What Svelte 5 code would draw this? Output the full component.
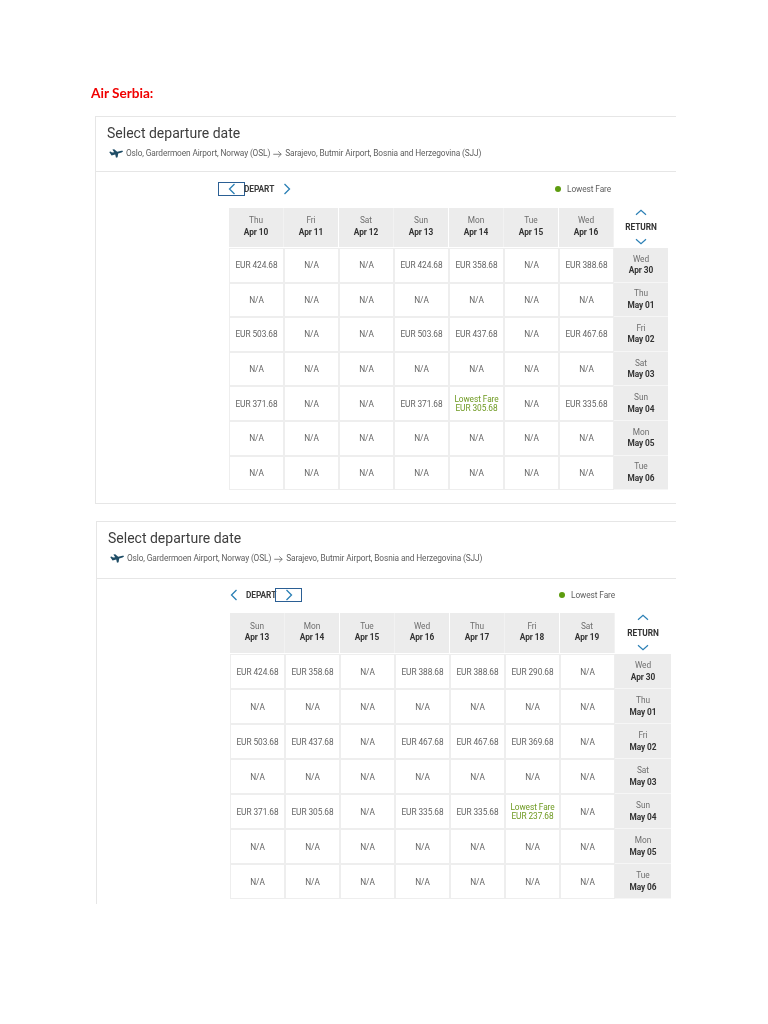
<script>
  const na = 'N/A';
  const returns = [['Wed','Apr 30'],['Thu','May 01'],['Fri','May 02'],['Sat','May 03'],['Sun','May 04'],['Mon','May 05'],['Tue','May 06']];
  const low = (v) => ({ low: true, v });
  const panels = [
    {
      cls: 'first',
      days: [['Thu','Apr 10'],['Fri','Apr 11'],['Sat','Apr 12'],['Sun','Apr 13'],['Mon','Apr 14'],['Tue','Apr 15'],['Wed','Apr 16']],
      focus: 'prev',
      rows: [
        ['EUR 424.68',na,na,'EUR 424.68','EUR 358.68',na,'EUR 388.68'],
        [na,na,na,na,na,na,na],
        ['EUR 503.68',na,na,'EUR 503.68','EUR 437.68',na,'EUR 467.68'],
        [na,na,na,na,na,na,na],
        ['EUR 371.68',na,na,'EUR 371.68',low('EUR 305.68'),na,'EUR 335.68'],
        [na,na,na,na,na,na,na],
        [na,na,na,na,na,na,na]
      ]
    },
    {
      cls: 'second',
      days: [['Sun','Apr 13'],['Mon','Apr 14'],['Tue','Apr 15'],['Wed','Apr 16'],['Thu','Apr 17'],['Fri','Apr 18'],['Sat','Apr 19']],
      focus: 'next',
      rows: [
        ['EUR 424.68','EUR 358.68',na,'EUR 388.68','EUR 388.68','EUR 290.68',na],
        [na,na,na,na,na,na,na],
        ['EUR 503.68','EUR 437.68',na,'EUR 467.68','EUR 467.68','EUR 369.68',na],
        [na,na,na,na,na,na,na],
        ['EUR 371.68','EUR 305.68',na,'EUR 335.68','EUR 335.68',low('EUR 237.68'),na],
        [na,na,na,na,na,na,na],
        [na,na,na,na,na,na,na]
      ]
    }
  ];
</script>

<main class="page">
  <h1 class="label">Air Serbia:</h1>

  {#each panels as p}
    <section class="panel {p.cls}">
      <header class="head">
        <h2>Select departure date</h2>
        <p class="route">
          <svg class="plane" viewBox="0 0 14 9" width="14" height="9" aria-hidden="true">
            <path d="M0.2 3 L1.6 2.6 L3 3.6 L5.2 3.2 L3.4 0.6 L5.2 0.2 L8.2 2.8 L11.4 2 C12.6 1.7 13.7 1.5 13.9 2 C14.1 2.6 13 3.3 11.8 3.7 L9.2 4.6 L8.6 8.2 L7 8.8 L6.2 5.6 L2.6 6.4 Z" />
          </svg>
          <span>Oslo, Gardermoen Airport, Norway (OSL)</span>
          <svg class="arrow" viewBox="0 0 10 8" width="9" height="8" aria-hidden="true">
            <path d="M0.3 4.3 H9 M5.8 1 L9.2 4.3 L5.8 7.4" />
          </svg>
          <span>Sarajevo, Butmir Airport, Bosnia and Herzegovina (SJJ)</span>
        </p>
      </header>

      <div class="nav">
        <button class="chev" class:focus={p.focus === 'prev'} aria-label="Previous">
          <svg viewBox="0 0 8 12" width="8" height="12"><path d="M6.5 1 L1.5 6 L6.5 11" /></svg>
        </button>
        <span class="depart">DEPART</span>
        <button class="chev" class:focus={p.focus === 'next'} aria-label="Next">
          <svg viewBox="0 0 8 12" width="8" height="12"><path d="M1.5 1 L6.5 6 L1.5 11" /></svg>
        </button>
        <span class="legend"><i class="dot"></i>Lowest Fare</span>
      </div>

      <div class="grid">
        {#each p.days as d}
          <div class="dayhead"><span>{d[0]}</span><b>{d[1]}</b></div>
        {/each}
        <div class="returnhead">
          <svg viewBox="0 0 12 7" width="12" height="7"><path d="M1 5.8 L6 1.2 L11 5.8" /></svg>
          <b>RETURN</b>
          <svg viewBox="0 0 12 7" width="12" height="7"><path d="M1 1.2 L6 5.8 L11 1.2" /></svg>
        </div>
        {#each p.rows as row, r}
          {#each row as c}
            {#if typeof c === 'object'}
              <div class="cell lowest"><span>Lowest Fare</span><span>{c.v}</span></div>
            {:else}
              <div class="cell">{c}</div>
            {/if}
          {/each}
          <div class="returncell"><span>{returns[r][0]}</span><b>{returns[r][1]}</b></div>
        {/each}
      </div>
    </section>
  {/each}
</main>

<style>
  :global(body) { margin: 0; background: #fff; }
  .page {
    width: 768px;
    height: 1024px;
    box-sizing: border-box;
    padding-top: 85px;
    font-family: Roboto, "Liberation Sans", sans-serif;
    color: #666;
    overflow: hidden;
    filter: blur(0.3px);
  }
  .label {
    margin: 0 0 0 91px;
    height: 31px;
    font: bold 13.6px/16px Lato, "Liberation Sans", sans-serif;
    color: #f00000;
  }
  .panel {
    box-sizing: border-box;
    width: 581px;
    margin-left: 95px;
    border: 1px solid #e6e6e6;
    border-right: 0;
    height: 388px;
    margin-bottom: 17px;
  }
  .panel.second {
    margin-left: 96px;
    width: 580px;
    height: 383px;
    margin-bottom: 0;
    border-bottom: 0;
  }
  .head {
    height: 55px;
    box-sizing: border-box;
    padding: 7px 0 0 11px;
    border-bottom: 1px solid #e6e6e6;
  }
  .second .head { height: 57px; padding-top: 7px; }
  h2 {
    margin: 0;
    font-size: 14px;
    line-height: 18px;
    font-weight: 400;
    color: #3d3d3d;
  }
  .route {
    margin: 4px 0 0 2px;
    display: flex;
    align-items: center;
    font-size: 8.3px;
    letter-spacing: -0.11px;
    line-height: 14px;
    color: #5e5e5e;
    white-space: nowrap;
  }
  .plane { fill: #1f4d66; margin-right: 3px; }
  .arrow { fill: none; stroke: #666; stroke-width: 0.9; margin: 1px 3px 0 3px; }
  .nav {
    display: flex;
    align-items: center;
    height: 14px;
    margin: 10px 0 0 122px;
    padding-right: 65px;
  }
  .second .nav { margin: 9px 0 0 123px; padding-right: 61px; }
  .chev {
    box-sizing: border-box;
    width: 27px;
    height: 14px;
    padding: 0;
    background: none;
    border: 1.5px solid transparent;
    display: flex;
    align-items: center;
    justify-content: center;
  }
  .chev.focus { border-color: #2b5f94; }
  .chev svg { fill: none; stroke: #2a7fb5; stroke-width: 1.3; }
  .depart {
    width: 29px;
    margin-left: -1px;
    font-size: 8.3px;
    letter-spacing: -0.05px;
    font-weight: 700;
    color: #3a3a3a;
    white-space: nowrap;
  }
  .legend {
    margin-left: auto;
    display: flex;
    align-items: center;
    font-size: 8.3px;
    letter-spacing: -0.1px;
    color: #5e5e5e;
  }
  .dot {
    width: 6px;
    height: 6px;
    border-radius: 50%;
    background: #5d9c0f;
    margin-right: 6px;
  }
  .grid {
    display: grid;
    grid-template-columns: repeat(7, 55px) 54px;
    grid-template-rows: 40px repeat(7, 34.6px);
    margin: 12px 0 0 133px;
    width: 439px;
  }
  .second .grid {
    grid-template-columns: repeat(7, 55px) 56px;
    grid-template-rows: 41px repeat(7, 35px);
    margin: 11px 0 0 133px;
    width: 441px;
  }
  .dayhead, .returncell {
    background: #ececec;
    display: flex;
    flex-direction: column;
    align-items: center;
    justify-content: center;
    font-size: 8.3px;
    letter-spacing: -0.07px;
    line-height: 11.5px;
    color: #6e6e6e;
    box-sizing: border-box;
  }
  .dayhead { border-right: 1px solid #f2f2f2; margin-bottom: 1px; padding-bottom: 2px; }
  .dayhead:nth-child(even) { border-right: 1.5px solid #fff; }
  .dayhead b, .returncell b { font-weight: 700; color: #333; }
  .returnhead {
    display: flex;
    flex-direction: column;
    align-items: center;
    justify-content: space-between;
    font-size: 8.3px;
    letter-spacing: -0.05px;
    color: #333;
    padding: 1px 0 3px;
    box-sizing: border-box;
  }
  .returnhead svg { fill: none; stroke: #2a7fb5; stroke-width: 1.2; }
  .returnhead b { font-weight: 700; }
  .cell {
    box-sizing: border-box;
    border: 1px solid #eeeeee;
    display: flex;
    flex-direction: column;
    align-items: center;
    justify-content: center;
    font-size: 8.3px;
    letter-spacing: -0.07px;
    color: #636363;
    white-space: nowrap;
  }
  .lowest { color: #6f9a22; line-height: 9px; }
  .returncell { border-bottom: 1px solid #f6f6f6; padding-top: 1px; }
</style>
